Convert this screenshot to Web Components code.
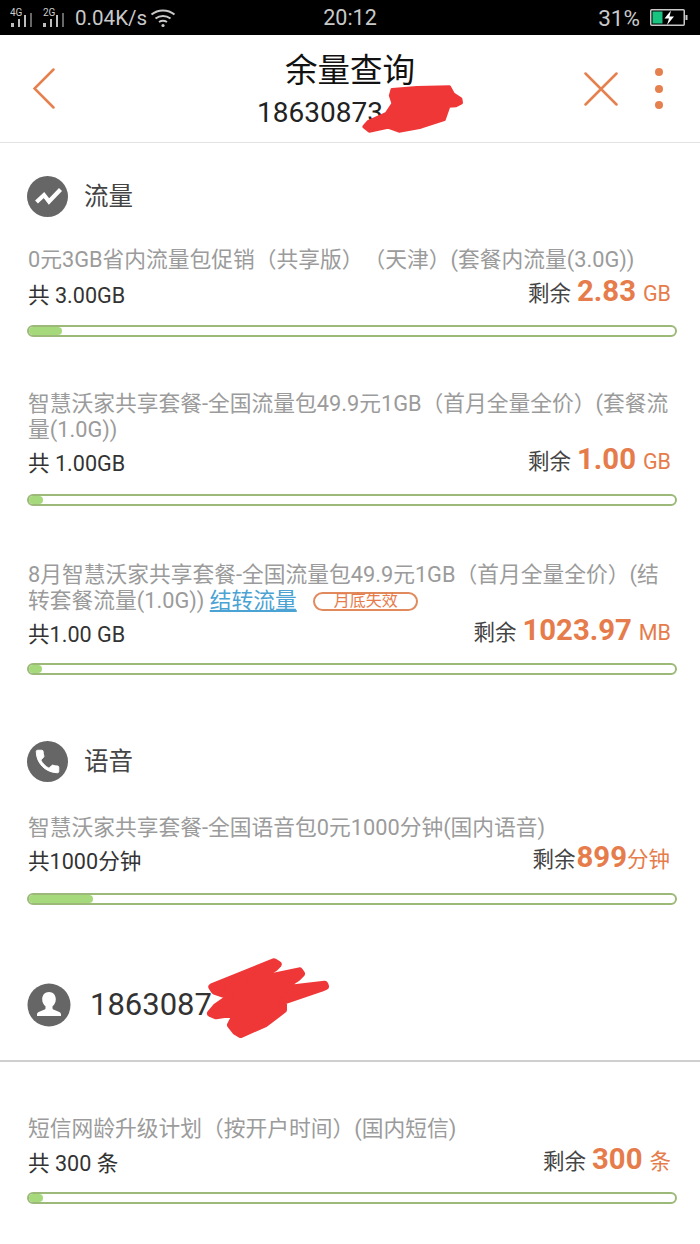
<!DOCTYPE html>
<html lang="zh">
<head>
<meta charset="utf-8">
<title>余量查询</title>
<style>
  html, body { margin: 0; padding: 0; background: #fff; }
  body {
    height: 1244px;
    overflow: hidden;
    font-family: Roboto, "Noto Sans CJK SC", sans-serif;
    --orange: #e67c4b;
  }
  a { color: #4aa3d3; text-decoration: underline; }
</style>
</head>
<body>
<status-bar></status-bar>
<app-header number="18630873"></app-header>

<section-head kind="data" style="margin-top:33px">流量</section-head>
<usage-item style="margin-top:30px; --bar-gap:16px" total="共 3.00GB" value="2.83" unit="GB" fill="33">0元3GB省内流量包促销（共享版）（天津）(套餐内流量(3.0G))</usage-item>
<usage-item style="margin-top:54px; --row-gap:2px" total="共 1.00GB" value="1.00" unit="GB" fill="14">智慧沃家共享套餐-全国流量包49.9元1GB（首月全量全价）(套餐流量(1.0G))</usage-item>
<usage-item style="margin-top:56px; --row-gap:2px; --bar-gap:15px" total="共1.00 GB" value="1023.97" unit="MB" fill="13">8月智慧沃家共享套餐-全国流量包49.9元1GB（首月全量全价）(结转套餐流量(1.0G)) <a>结转流量</a> <status-tag>月底失效</status-tag></usage-item>

<section-head kind="voice" style="margin-top:66px">语音</section-head>
<usage-item style="margin-top:33px; --row-gap:2px; --bar-gap:18px" total="共1000分钟" value="899" unit="分钟" fill="64" compact>智慧沃家共享套餐-全国语音包0元1000分钟(国内语音)</usage-item>

<user-row number="1863087"></user-row>
<usage-item style="margin-top:54px; --row-gap:3px; --bar-gap:15px" total="共 300 条" value="300" unit="条" fill="14">短信网龄升级计划（按开户时间）(国内短信)</usage-item>

<script>
class StatusBar extends HTMLElement {
  connectedCallback() {
    if (this.shadowRoot) return;
    const bars = (x) => `
      <rect x="${x}" y="18" width="3" height="4" />
      <rect x="${x + 7}" y="14" width="2" height="8" />
      <rect x="${x + 13}" y="10" width="2" height="12" />
      <rect x="${x + 19}" y="8" width="2" height="14" opacity=".55" />`;
    this.attachShadow({ mode: 'open' }).innerHTML = `
      <style>
        :host {
          display: grid;
          grid-template-columns: 1fr auto 1fr;
          align-items: center;
          height: 35px;
          background: #000;
          color: #c9c9c9;
          font-size: 21.5px;
          font-family: Roboto, sans-serif;
        }
        .left, .right { display: flex; align-items: center; }
        .left { padding-left: 10px; gap: 3px; }
        .right { justify-content: flex-end; padding-right: 12px; gap: 10px; }
        .speed { font-size: 20.6px; margin-left: 2px; }
        .pct { font-size: 22.5px; }
        svg { display: block; }
      </style>
      <div class="left">
        <svg width="60" height="28" fill="#bdbdbd" viewBox="0 0 60 28" aria-hidden="true">
          <g transform="translate(-10,1)">${bars(11)}</g>
          <g transform="translate(22,1)">${bars(11)}</g>
          <text x="0" y="12" font-size="10" font-family="Roboto" fill="#ccc">4G</text>
          <text x="33" y="12" font-size="10" font-family="Roboto" fill="#ccc">2G</text>
        </svg>
        <span class="speed">0.04K/s</span>
        <svg width="26" height="20" viewBox="0 0 26 20" fill="none" stroke="#c9c9c9" stroke-width="2" aria-hidden="true">
          <path d="M1.500 6.500C8 1 18 1 24.500 6.500" />
          <path d="M5.500 10.500C10 7 16 7 20.500 10.500" />
          <path d="M9 14c2.500-1.600 5.500-1.600 8 0" />
          <circle cx="13" cy="17.500" r="1.600" fill="#c9c9c9" stroke="none" />
        </svg>
      </div>
      <div class="time">20:12</div>
      <div class="right">
        <span class="pct">31%</span>
        <svg width="38" height="18" viewBox="0 0 38 18" aria-hidden="true">
          <rect x=".75" y=".75" width="33.500" height="15.500" fill="none" stroke="#c9c9c9" stroke-width="1.500" rx="1" />
          <rect x="2.500" y="2.500" width="10" height="12" fill="#18c480" />
          <path d="M21 1.500 14.500 9.500h4.500l-2 6.500 7-8.500h-4.500z" fill="#fff" />
          <rect x="35.500" y="6" width="2" height="5" fill="#c9c9c9" />
        </svg>
      </div>`;
  }
}
customElements.define('status-bar', StatusBar);

class AppHeader extends HTMLElement {
  connectedCallback() {
    if (this.shadowRoot) return;
    this.attachShadow({ mode: 'open' }).innerHTML = `
      <style>
        :host {
          display: grid;
          grid-template-columns: 120px 1fr 120px;
          align-items: center;
          height: 107px;
          position: relative;
          border-bottom: 1px solid #e2e2e2;
          color: #111;
          text-align: center;
        }
        .back { padding-left: 33px; }
        .middle { padding-top: 4px; }
        .title { font-size: 32.500px; line-height: 40px; }
        /* the rest of the number sits under the scribble */
        .number { font-size: 28px; line-height: 36px; margin-top: 4px; padding-right: 60px; color: #222; }
        .actions { display: flex; justify-content: flex-end; align-items: center; gap: 36px; padding-right: 36px; }
        svg { display: block; }
        .scrawl { position: absolute; left: 360px; top: 48px; }
      </style>
      <div class="back">
        <svg width="22" height="41" viewBox="0 0 22 41" fill="none" stroke="#e5814f" stroke-width="2.500" stroke-linecap="round" aria-hidden="true">
          <path d="M20.500 1.500 1.500 20.500l19 19" />
        </svg>
      </div>
      <div class="middle">
        <div class="title">余量查询</div>
        <div class="number">${this.getAttribute('number')}</div>
      </div>
      <div class="actions">
        <svg width="34" height="34" viewBox="0 0 34 34" fill="none" stroke="#e5814f" stroke-width="2.500" stroke-linecap="round" aria-hidden="true">
          <path d="M1.500 1.500l31 31M32.500 1.500l-31 31" />
        </svg>
        <svg width="10" height="42" viewBox="0 0 10 42" fill="#e5814f" aria-hidden="true">
          <circle cx="5" cy="4" r="4" /><circle cx="5" cy="21" r="4" /><circle cx="5" cy="37" r="4" />
        </svg>
      </div>
      <svg class="scrawl" width="104" height="51" viewBox="28 248 314 154" aria-hidden="true">
        <path fill="#ef3737" stroke="#ef3737" stroke-width="10" stroke-linejoin="round"
          d="M125 268 200 262 298 260 310 282 332 296 334 308 318 316 296 318 282 358 212 381 146 393 112 381 56 393 40 380 54 364 108 340 128 310 120 286z" />
      </svg>`;
  }
}
customElements.define('app-header', AppHeader);

const ICONS = {
  data: `<path d="M9.500 26 17 19l5 6.500L33.500 13.500" fill="none" stroke="#fff" stroke-width="4.200" />`,
  voice: `<path fill="#fff" stroke="#fff" stroke-width=".8" stroke-linejoin="round" transform="translate(5.500,5.500) scale(1.250)" d="M6.600 10.800c1.400 2.800 3.800 5.100 6.600 6.600l2.200-2.200c.3-.3.700-.4 1-.2 1.100.4 2.300.6 3.600.6.600 0 1 .4 1 1V20c0 .6-.4 1-1 1C10.600 21 3 13.400 3 4c0-.6.400-1 1-1h3.500c.6 0 1 .4 1 1 0 1.300.2 2.500.6 3.600.1.300 0 .7-.2 1z" />`,
};

class SectionHead extends HTMLElement {
  connectedCallback() {
    if (this.shadowRoot) return;
    const kind = this.getAttribute('kind');
    this.attachShadow({ mode: 'open' }).innerHTML = `
      <style>
        :host {
          display: flex;
          align-items: center;
          gap: 16px;
          padding-left: 27px;
          height: 41px;
          font-size: 24.500px;
          color: #444;
        }
        span { margin-bottom: 4px; }
        svg { display: block; }
      </style>
      <svg width="41" height="41" viewBox="0 0 41 41" aria-hidden="true">
        <circle cx="20.500" cy="20.500" r="20.500" fill="#666" />
        ${ICONS[kind]}
      </svg>
      <span><slot></slot></span>`;
  }
}
customElements.define('section-head', SectionHead);

class UsageItem extends HTMLElement {
  connectedCallback() {
    if (this.shadowRoot) return;
    const compact = this.hasAttribute('compact');
    const fill = this.getAttribute('fill');
    this.attachShadow({ mode: 'open' }).innerHTML = `
      <style>
        :host {
          display: block;
          padding: 0 23px 0 28px;
        }
        .title {
          font-size: 21.750px;
          line-height: 26px;
          color: #9b9b9b;
          text-spacing-trim: space-all;
        }
        .row {
          display: flex;
          justify-content: space-between;
          align-items: center;
          margin-top: var(--row-gap, 4px);
          height: 32px;
          font-size: 21.600px;
          color: #333;
        }
        .left {
          display: flex;
          align-items: baseline;
          gap: ${compact ? 0 : 7}px;
          margin-bottom: 4px;
          padding-right: ${compact ? 7 : 6}px;
          font-size: 21.500px;
          color: #444;
        }
        .left b { font-size: 29.300px; font-weight: 700; color: var(--orange, #e67c4b); margin-left: ${compact ? 1 : -1}px; }
        .left i { font-style: normal; font-size: 21.500px; color: var(--orange, #e67c4b); }
        .bar {
          box-sizing: border-box;
          height: 12px;
          margin: var(--bar-gap, 17px) 0 0 -1px;
          border: 2px solid #9cb97a;
          border-radius: 6px;
          overflow: hidden;
        }
        .bar div { height: 100%; width: ${fill}px; background: #a6d97c; border-radius: 0 4px 4px 0; }
      </style>
      <div class="title"><slot></slot></div>
      <div class="row">
        <span>${this.getAttribute('total')}</span>
        <span class="left">剩余<b>${this.getAttribute('value')}</b><i>${this.getAttribute('unit')}</i></span>
      </div>
      <div class="bar"><div></div></div>`;
  }
}
customElements.define('usage-item', UsageItem);

class StatusTag extends HTMLElement {
  connectedCallback() {
    if (this.shadowRoot) return;
    this.attachShadow({ mode: 'open' }).innerHTML = `
      <style>
        :host {
          display: inline-block;
          box-sizing: border-box;
          width: 105px;
          height: 19px;
          margin-left: 11px;
          border: 2px solid #e08a5e;
          border-radius: 10px;
          font-size: 16px;
          line-height: 14px;
          text-align: center;
          color: #e67c4b;
          vertical-align: 2px;
        }
      </style>
      <slot></slot>`;
  }
}
customElements.define('status-tag', StatusTag);

class UserRow extends HTMLElement {
  connectedCallback() {
    if (this.shadowRoot) return;
    this.attachShadow({ mode: 'open' }).innerHTML = `
      <style>
        :host {
          display: flex;
          align-items: center;
          gap: 19px;
          position: relative;
          margin-top: 78px;
          padding: 0 0 34px 27px;
          height: 43px;
          border-bottom: 2px solid #cfcfcf;
          font-size: 31px;
          color: #333;
        }
        svg { display: block; }
        .scrawl { position: absolute; left: 200px; top: -28px; }
      </style>
      <svg width="44" height="44" viewBox="0 0 44 44" aria-hidden="true">
        <circle cx="22" cy="22" r="21.500" fill="#666" />
        <path fill="#fff" d="M22 9c4.300 0 6.800 3.200 6.800 7.200 0 3-1.300 5.600-3.300 7v1.700c0 1 .5 1.500 1.500 1.900l5.300 2.100c1.100.5 1.700 1.300 1.700 2.500V33H10v-1.600c0-1.200.6-2 1.700-2.500l5.300-2.100c1-.4 1.500-.9 1.500-1.900v-1.700c-2-1.400-3.300-4-3.300-7C15.200 12.200 17.700 9 22 9z" />
      </svg>
      <span>${this.getAttribute('number')}</span>
      <svg class="scrawl" width="134" height="87" viewBox="600 20 402 261" aria-hidden="true">
        <path fill="#ef3737" stroke="#ef3737" stroke-width="22" stroke-linejoin="round"
          d="M636 116 822 41 834 48 822 60 745 100 898 68 904 76 892 88 838 124 974 108 976 114 962 120 850 158 850 184 795 226 722 258 708 250 692 230 712 192 648 202 632 195 648 176 692 145 644 128z" />
      </svg>`;
  }
}
customElements.define('user-row', UserRow);
</script>
</body>
</html>
